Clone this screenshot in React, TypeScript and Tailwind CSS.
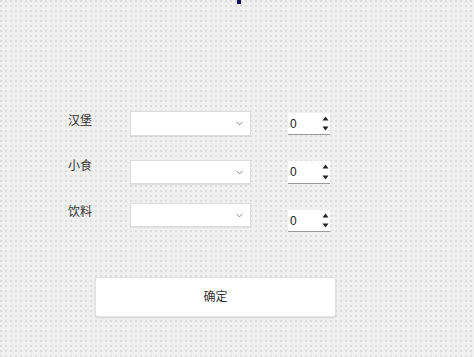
import { ChevronDown } from "lucide-react";

const font = "font-['Liberation_Sans','Noto_Sans_CJK_SC',sans-serif]";

function Combo({ className }: { className: string }) {
  return (
    <div
      className={`w-[121px] bg-white border border-[#dcdcdc] shadow-[0_1px_1px_rgba(0,0,0,0.06)] flex items-center justify-end pr-[5px] ${className}`}
    >
      <ChevronDown size={11} strokeWidth={1.6} className="text-[#606060]" />
    </div>
  );
}

function Spin({ className }: { className: string }) {
  return (
    <div
      className={`w-[42px] h-[22px] bg-white border-b border-[#9a9a9a] flex items-center justify-between pl-[2px] pr-[1px] ${className}`}
    >
      <span className="text-[12px] text-[#222] leading-none">0</span>
      <div className="flex flex-col justify-between h-full py-[3px]">
        <svg width="7" height="5" viewBox="0 0 7 5">
          <path d="M3.5 0.5 L6.5 4.5 L0.5 4.5 Z" fill="#222" />
        </svg>
        <svg width="7" height="5" viewBox="0 0 7 5">
          <path d="M0.5 0.5 L6.5 0.5 L3.5 4.5 Z" fill="#222" />
        </svg>
      </div>
    </div>
  );
}

export default function App() {
  return (
    <div
      className={`relative w-[474px] h-[357px] overflow-hidden bg-[#f0f0f0] bg-[radial-gradient(circle_at_1px_1px,#dedede_0.8px,transparent_1px)] [background-size:5px_5px] ${font}`}
    >
      <div className="absolute left-[237px] top-0 w-[4px] h-[4px] bg-[#14145a]" />
      <div className="pt-[111px] pl-[68px] text-[12px] text-[#333]">
        <div className="flex items-start">
          <span className="w-[62px] leading-[16px] mt-[2px]">汉堡</span>
          <Combo className="h-[25px]" />
          <Spin className="ml-[37px] mt-[2px]" />
        </div>
        <div className="flex items-start mt-[22px]">
          <span className="w-[62px] leading-[16px]">小食</span>
          <Combo className="h-[24px] mt-[2px]" />
          <Spin className="ml-[37px] mt-[3px] h-[23px]" />
        </div>
        <div className="flex items-start mt-[19px]">
          <span className="w-[62px] leading-[16px] mt-[1px]">饮料</span>
          <Combo className="h-[24px]" />
          <Spin className="ml-[37px] mt-[7px]" />
        </div>
        <button className="ml-[27px] mt-[45px] w-[241px] h-[40px] bg-white border border-[#e2e2e2] rounded-[3px] shadow-[0_1px_2px_rgba(0,0,0,0.12)] text-[12px] text-[#333] flex items-center justify-center">
          确定
        </button>
      </div>
    </div>
  );
}
